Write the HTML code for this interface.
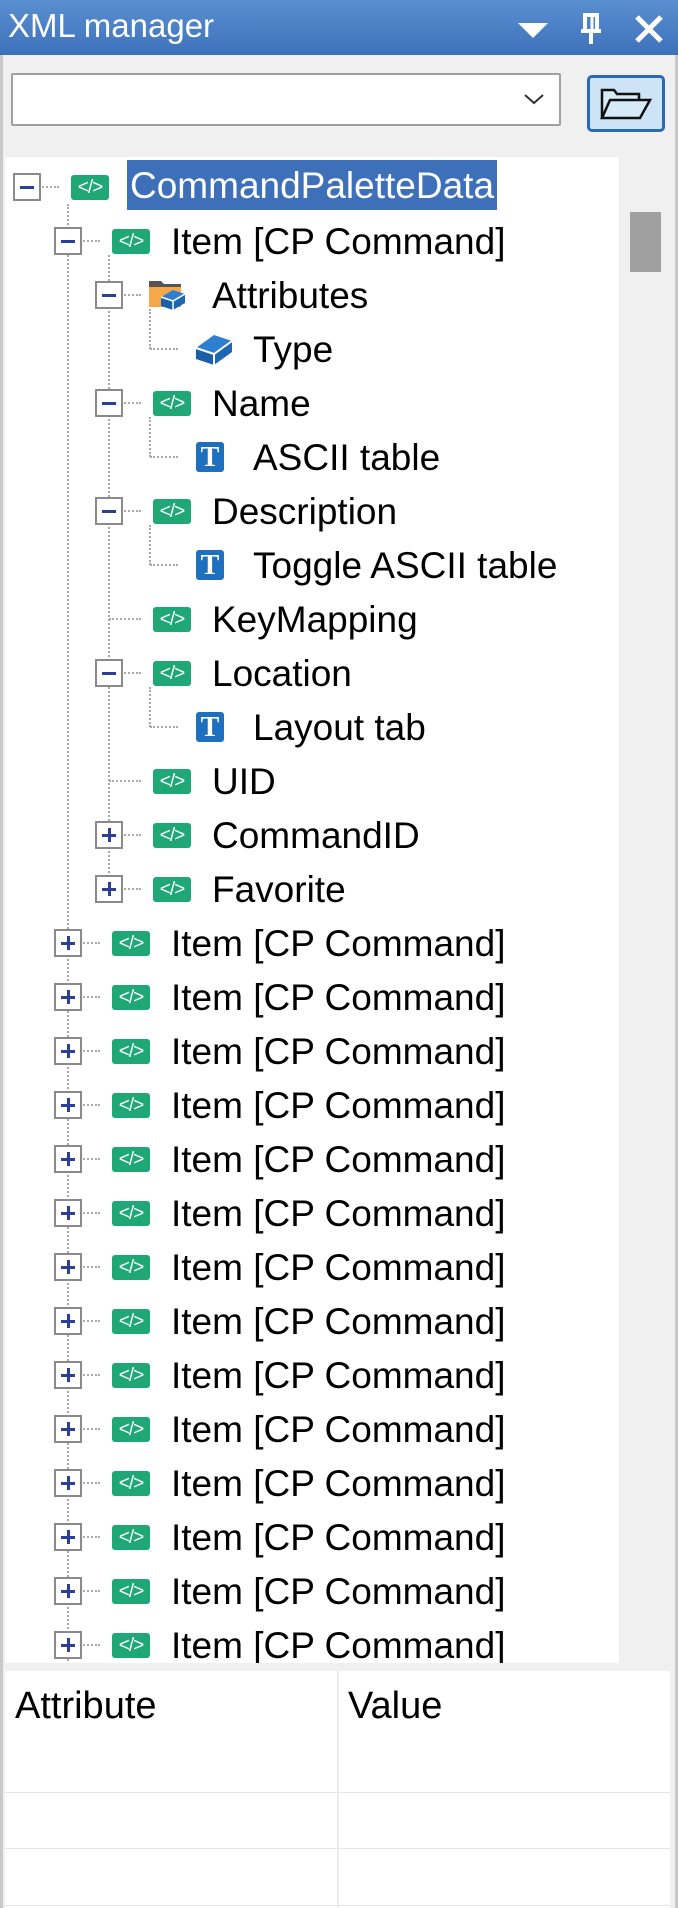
<!DOCTYPE html>
<html><head><meta charset="utf-8"><style>
*{margin:0;padding:0;box-sizing:border-box}
body{width:678px;height:1908px;background:#f0f0f0;position:relative;overflow:hidden;font-family:"Liberation Sans",sans-serif}
.abs{position:absolute}
.title{left:0;top:0;width:678px;height:55px;background:linear-gradient(#5a8fd0,#3d72bb);}
.title span{position:absolute;left:8px;top:6px;font-size:33px;color:#fff;line-height:40px}
.tree{left:5px;top:157px;width:614px;height:1506px;background:#fff;overflow:hidden}
.row{position:absolute;height:54px;line-height:54px;font-size:37px;color:#000;white-space:nowrap}
.box{position:absolute;width:28px;height:28px;border:2px solid #8a8a8a;background:#fff}
.box:before{content:"";position:absolute;left:5px;top:11px;width:14px;height:3px;background:#2b3f96}
.box.p:after{content:"";position:absolute;left:10.5px;top:5px;width:3px;height:14px;background:#2b3f96}
.vl{position:absolute;width:0;border-left:2px dotted #a8a8a8}
.hl{position:absolute;height:0;border-top:2px dotted #a8a8a8}
.tag{position:absolute;width:38px;height:25px;background:#1fa876;border-radius:3px;color:#fff;font-size:19px;line-height:25px;text-align:center;letter-spacing:-1px}
.tico{position:absolute;width:28px;height:30px;background:#1f6fbf;border-radius:3px;color:#fff;font-family:"Liberation Serif",serif;font-weight:bold;font-size:28px;line-height:31px;text-align:center}
.sel{background:#3d70b9;color:#fff;padding:0 3px}
</style></head><body>
<div class="abs title"><span>XML manager</span>
<svg class="abs" style="left:516px;top:20px" width="34" height="20"><polygon points="2,3 32,3 17,18" fill="#fff"/></svg>
<svg class="abs" style="left:578px;top:12px" width="26" height="34"><path d="M7 3h12v16H7z M3 19h20" stroke="#fff" stroke-width="4" fill="none"/><path d="M13 19v13" stroke="#fff" stroke-width="4"/><path d="M14 3v15" stroke="#fff" stroke-width="3"/></svg>
<svg class="abs" style="left:634px;top:14px" width="30" height="30"><path d="M3 3L27 27M27 3L3 27" stroke="#fff" stroke-width="5"/></svg>
</div>
<div class="abs" style="left:0;top:55px;width:678px;height:1853px;border-left:3px solid #c9c9c9;border-right:3px solid #c9c9c9"></div>
<div class="abs" style="left:11px;top:73px;width:550px;height:53px;background:#fff;border:2px solid #a0a0a0;border-radius:2px"></div>
<svg class="abs" style="left:523px;top:92px" width="22" height="14"><path d="M2 3L11 11L20 3" stroke="#333" stroke-width="2" fill="none"/></svg>
<div class="abs" style="left:587px;top:75px;width:78px;height:57px;background:#cde4f7;border:3px solid #2a6ab5;border-radius:5px"></div>
<svg class="abs" style="left:598px;top:84px" width="56" height="40"><path d="M4 34V6h12l3 4h22v6" stroke="#111" stroke-width="2.5" fill="#d6ebf8"/><path d="M4 34L12 16H52L42 34Z" stroke="#111" stroke-width="2.5" fill="#d6ebf8"/></svg>
<div class="abs tree" id="tree">
</div>
<div class="abs" style="left:630px;top:212px;width:31px;height:60px;background:#a0a0a0"></div>
<div class="abs" style="left:5px;top:1671px;width:665px;height:237px;background:#fff"></div>
<div class="abs" style="left:337px;top:1671px;width:2px;height:237px;background:#ececec"></div>
<div class="abs" style="left:5px;top:1792px;width:665px;height:1px;background:#e6e6e6"></div>
<div class="abs" style="left:5px;top:1848px;width:665px;height:1px;background:#e6e6e6"></div>
<div class="abs" style="left:5px;top:1905px;width:665px;height:1px;background:#e6e6e6"></div>
<div class="abs" style="left:15px;top:1684px;font-size:38px;line-height:44px">Attribute</div>
<div class="abs" style="left:348px;top:1684px;font-size:38px;line-height:44px">Value</div>
<script>
var rows=[[0,'-','tag','CommandPaletteData'],[1,'-','tag','Item [CP Command]'],[2,'-','fold','Attributes'],[3,'','cube','Type'],[2,'-','tag','Name'],[3,'','T','ASCII table'],[2,'-','tag','Description'],[3,'','T','Toggle ASCII table'],[2,'','tag','KeyMapping'],[2,'-','tag','Location'],[3,'','T','Layout tab'],[2,'','tag','UID'],[2,'+','tag','CommandID'],[2,'+','tag','Favorite']];
for(var i=0;i<14;i++)rows.push([1,'+','tag','Item [CP Command]']);
var h='',ox=-5,oy=-157,B=187;
function vl(x,y1,y2){h+='<div class="vl" style="left:'+(x+ox-1)+'px;top:'+(y1+oy)+'px;height:'+(y2-y1)+'px"></div>';}
vl(68,B+17,1700);vl(109,B+54+14,B+54*13);
[[2,3],[4,5],[6,7],[9,10]].forEach(function(p){vl(150,B+54*p[0]+14,B+54*p[1]);});
rows.forEach(function(r,i){
 var L=r[0],c=B+54*i,col=27+41*L,ix=71+41*L,tx=130+41*L;
 if(L==3){h+='<div class="hl" style="left:'+(150+ox)+'px;top:'+(c+oy-1)+'px;width:28px"></div>';}
 else h+='<div class="hl" style="left:'+(col+ox)+'px;top:'+(c+oy-1)+'px;width:'+(ix-12-col)+'px"></div>';
 if(r[1])h+='<div class="box'+(r[1]=='+'?' p':'')+'" style="left:'+(13+41*L+ox)+'px;top:'+(c-14+oy)+'px"></div>';
 var t=r[2];
 if(t=='tag')h+='<div class="tag" style="left:'+(ix+ox)+'px;top:'+(c-12+oy)+'px">&lt;/&gt;</div>';
 else if(t=='T')h+='<div class="tico" style="left:'+(ix+ox+2)+'px;top:'+(c-15+oy)+'px">T</div>';
 else if(t=='cube')h+='<svg style="position:absolute;left:'+(ix+ox)+'px;top:'+(c-17+oy)+'px" width="40" height="34"><path d="M2 16L20 3L38 9L20 22Z" fill="#2f7fd0"/><path d="M2 16L20 22L20 33L2 27Z" fill="#1a5fa8"/><path d="M20 22L38 9L38 20L20 33Z" fill="#1d66b3"/><path d="M2 16L20 22L38 9M20 22V33" stroke="#fff" stroke-width="2" fill="none"/></svg>';
 else h+='<svg style="position:absolute;left:'+(ix+ox-5)+'px;top:'+(c-18+oy)+'px" width="42" height="36"><path d="M1 4h12l3 3h17v5H1z" fill="#555"/><path d="M1 10h32v20H1z" fill="#f5a74a"/><path d="M13 20L25 13L37 17L25 24Z" fill="#2f7fd0"/><path d="M13 20L25 24V33L13 29Z" fill="#1a5fa8"/><path d="M25 24L37 17V26L25 33Z" fill="#1d66b3"/><path d="M13 20L25 24L37 17M25 24V33" stroke="#fff" stroke-width="1.5" fill="none"/></svg>';
 var txt=r[3].replace(/&/g,'&amp;');
 if(i==0)h+='<div class="row" style="left:'+(tx-3+ox)+'px;top:'+(160+oy)+'px;height:50px;line-height:52px"><span class="sel" style="display:inline-block;height:50px">'+txt+'</span></div>';
 else h+='<div class="row" style="left:'+(tx+ox)+'px;top:'+(c-26+oy)+'px">'+txt+'</div>';
});
document.getElementById('tree').innerHTML=h;
</script>
</body></html>
